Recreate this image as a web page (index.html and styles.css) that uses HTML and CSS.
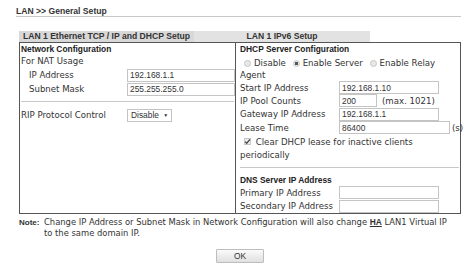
FILE: index.html
```html
<!DOCTYPE html>
<html lang="en">
<head>
    <meta charset="UTF-8">
    <title>LAN General Setup</title>
    <link rel="stylesheet" href="styles.css">
</head>
<body>
    <div class="page">
        <div class="title">LAN &gt;&gt; General Setup</div>

        <!-- Tabs -->
        <div class="tabs">
            <div class="tab active">LAN 1 Ethernet TCP / IP and DHCP Setup</div>
            <div class="tab">LAN 1 IPv6 Setup</div>
        </div>

        <div class="panel">
            <!-- Network Configuration -->
            <div class="col col-left">
                <div class="head">Network Configuration</div>
                <div class="line">For NAT Usage</div>
                <div class="row indent">
                    <label>IP Address</label>
                    <input type="text" class="field wide" value="192.168.1.1">
                </div>
                <div class="row indent">
                    <label>Subnet Mask</label>
                    <input type="text" class="field wide" value="255.255.255.0">
                </div>
                <div class="sep"></div>
                <div class="row">
                    <label>RIP Protocol Control</label>
                    <span class="select">Disable <span class="arrow">&#9660;</span></span>
                </div>
            </div>

            <!-- DHCP Server Configuration -->
            <div class="col col-right">
                <div class="head">DHCP Server Configuration</div>
                <div class="radios">
                    <span class="radio"></span>Disable
                    <span class="radio on"></span>Enable Server
                    <span class="radio"></span>Enable Relay<br>Agent
                </div>
                <div class="row">
                    <label>Start IP Address</label>
                    <input type="text" class="field" value="192.168.1.10">
                </div>
                <div class="row">
                    <label>IP Pool Counts</label>
                    <span><input type="text" class="field short" value="200"><span class="hint">(max. 1021)</span></span>
                </div>
                <div class="row">
                    <label>Gateway IP Address</label>
                    <input type="text" class="field" value="192.168.1.1">
                </div>
                <div class="row">
                    <label>Lease Time</label>
                    <span class="nowrap"><input type="text" class="field lease" value="86400"><span class="unit">(s)</span></span>
                </div>
                <div class="check-line">
                    <span class="check"><svg viewBox="0 0 8 8" width="7" height="7"><path d="M1.2 4.2 L3.1 6 L6.8 1.6" fill="none" stroke="#444" stroke-width="1.4"/></svg></span>
                    Clear DHCP lease for inactive clients<br>periodically
                </div>
                <div class="sep"></div>
                <div class="head">DNS Server IP Address</div>
                <div class="row">
                    <label>Primary IP Address</label>
                    <input type="text" class="field" value="">
                </div>
                <div class="row">
                    <label>Secondary IP Address</label>
                    <input type="text" class="field" value="">
                </div>
            </div>
        </div>

        <div class="note">
            <span class="note-label">Note:</span>
            <p class="note-text">Change IP Address or Subnet Mask in Network Configuration will also change <u class="ha">HA</u> LAN1 Virtual IP<br>to the same domain IP.</p>
        </div>

        <div class="actions">
            <button class="btn">OK</button>
        </div>
    </div>
</body>
</html>
```

FILE: styles.css
```css
* {
    box-sizing: border-box;
    margin: 0;
    padding: 0;
}

body {
    background: #fff;
    color: #333;
    font-family: 'DejaVu Sans', Verdana, sans-serif;
    font-size: 8.6px;
}

.page {
    padding: 6px 13px 0 16px;
}

.title {
    font-family: 'Liberation Sans', Arial, sans-serif;
    font-weight: bold;
    font-size: 8.6px;
    color: #333;
    line-height: 10px;
    border-bottom: 1px solid #c8c8c8;
}

.tabs {
    display: flex;
    margin: 14px 0 0 3px;
}

.tab {
    font-family: 'Liberation Sans', Arial, sans-serif;
    font-weight: bold;
    font-size: 8.6px;
    color: #333;
    height: 11px;
    line-height: 11px;
    text-align: center;
    background: #e2e2e2;
    width: 176px;
}

.tab.active {
    background: #d8d8d8;
    width: 175px;
}

.panel {
    display: flex;
    margin-left: 3px;
    border: 1px solid #555;
    height: 172px;
}

.col {
    display: flex;
    flex-direction: column;
}

.col-left {
    width: 216px;
    padding-left: 1px;
    border-right: 1px solid #555;
}

.col-right {
    flex: 1;
    min-width: 0;
    padding-left: 4px;
}

.head {
    font-family: 'Liberation Sans', Arial, sans-serif;
    font-weight: bold;
    font-size: 8.4px;
    color: #222;
    line-height: 12px;
}

.line {
    line-height: 13px;
}

.row {
    display: flex;
    align-items: center;
    height: 14px;
}

.row label {
    width: 106px;
    flex: none;
}

.col-right .row label {
    width: 99px;
}

.indent label {
    padding-left: 8px;
}

.nowrap {
    white-space: nowrap;
}

.field {
    font-family: 'Liberation Sans', Arial, sans-serif;
    font-size: 8.4px;
    color: #333;
    height: 13px;
    width: 100px;
    padding: 0 2px;
    border: 1px solid #c4c4c4;
    background: #fff;
}

.field.wide {
    width: 108px;
}

.field.short {
    width: 38px;
}

.field.lease {
    width: 111px;
}

.hint {
    margin-left: 5px;
}

.unit {
    margin-left: 2px;
}

.sep {
    border-top: 1px solid #c8c8c8;
    margin: 5px 1px 6px 0;
}

.select {
    font-family: 'Liberation Sans', Arial, sans-serif;
    font-size: 8.4px;
    display: inline-block;
    height: 13px;
    line-height: 11px;
    padding: 0 3px;
    border: 1px solid #c4c4c4;
    background: #fff;
    color: #333;
}

.arrow {
    font-size: 5px;
    vertical-align: 1px;
    margin-left: 2px;
}

.radios {
    line-height: 12px;
    padding-top: 2px;
}

.radio {
    display: inline-block;
    width: 7px;
    height: 7px;
    margin: 0 3px 0 4px;
    border-radius: 50%;
    border: 1px solid #c6c6c6;
    background: #e8e8e8;
    vertical-align: -1px;
}

.radio.on {
    background: radial-gradient(circle, #555 0 1.6px, #e8e8e8 2px);
}

.check-line {
    line-height: 13px;
    padding: 2px 0 0;
}

.check {
    display: inline-block;
    width: 7px;
    height: 7px;
    margin-left: 4px;
    margin-right: 2px;
    border: 1px solid #c6c6c6;
    background: #eee;
    position: relative;
}

.check svg {
    position: absolute;
    left: -1px;
    top: -1px;
}

.note {
    display: flex;
    margin: 3px 0 0 3px;
    font-size: 8.4px;
    line-height: 11px;
}

.note-label {
    font-family: 'Liberation Sans', Arial, sans-serif;
    font-weight: bold;
    font-size: 8px;
    width: 25px;
    flex: none;
}

.ha {
    font-family: 'Liberation Sans', Arial, sans-serif;
    font-weight: bold;
}

.actions {
    text-align: center;
    margin-top: 10px;
    padding-left: 3px;
}

.btn {
    font-family: 'Liberation Sans', Arial, sans-serif;
    font-size: 8.4px;
    color: #333;
    width: 48px;
    height: 14px;
    border: 1px solid #bdbdbd;
    border-radius: 1px;
    background: linear-gradient(#fafafa, #e0e0e0);
}
```
